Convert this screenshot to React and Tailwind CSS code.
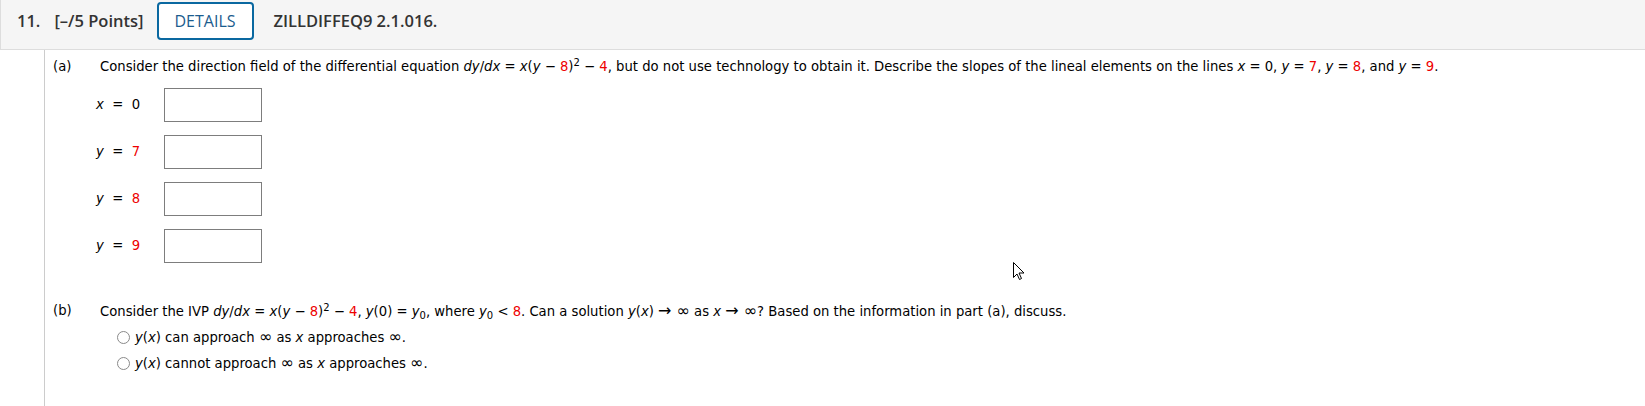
import React from "react";

const font = { fontFamily: '"DejaVu Sans", Verdana, sans-serif' };

function V({ children }) {
  return <i className="italic">{children}</i>;
}

function R({ children }) {
  return <span className="text-[#ee0000]">{children}</span>;
}

function Box() {
  return <div className="w-[98px] h-[34px] border border-[#7d7d7d] bg-white" />;
}

function Radio({ children }) {
  return (
    <label className="flex items-center gap-[5px] h-[26px]">
      <span className="w-[13px] h-[13px] rounded-full border border-[#8a8a8a] bg-white" />
      <span>{children}</span>
    </label>
  );
}

export default function App() {
  const rows = [
    { v: "x", n: "0", red: false },
    { v: "y", n: "7", red: true },
    { v: "y", n: "8", red: true },
    { v: "y", n: "9", red: true },
  ];

  return (
    <div className="relative w-[1645px] h-[406px] bg-white overflow-hidden text-black">
      {/* header */}
      <div
        className="h-[50px] bg-[#f5f5f5] border-b border-l border-[#dddddd] flex items-start pt-[2px] pl-[16px] text-[16.5px] font-semibold text-[#333333]"
        style={{ fontFamily: '"Open Sans", sans-serif' }}
      >
        <div className="h-[38px] flex items-center">
          <span>11.</span>
          <span className="ml-[14px]">[–/5 Points]</span>
        </div>
        <button className="ml-[13px] h-[38px] w-[97px] border-2 border-[#0a68a0] rounded-[4px] bg-white text-[#1b5c8e] font-normal text-[16px] flex items-center justify-center">
          DETAILS
        </button>
        <div className="ml-[20px] h-[38px] flex items-center">ZILLDIFFEQ9 2.1.016.</div>
      </div>

      {/* body */}
      <div className="ml-[44px] h-[356px] border-l border-[#cccccc] pl-[8px] pt-[8px] text-[13.2px]" style={font}>
        <div className="flex leading-[18px]">
          <span className="w-[47px] shrink-0">(a)</span>
          <span>
            Consider the direction field of the differential equation <V>dy</V>/<V>dx</V> = <V>x</V>(<V>y</V> − <R>8</R>)
            <sup className="text-[10px]">2</sup> − <R>4</R>, but do not use technology to obtain it. Describe the slopes of
            the lineal elements on the lines <V>x</V> = 0, <V>y</V> = <R>7</R>, <V>y</V> = <R>8</R>, and <V>y</V> = <R>9</R>.
          </span>
        </div>

        <div className="mt-[12px] flex flex-col gap-[13px]">
          {rows.map((r) => (
            <div key={r.v + r.n} className="flex items-center">
              <span className="w-[111px] pl-[43px] whitespace-pre">
                <V>{r.v}</V>{"  =  "}{r.red ? <R>{r.n}</R> : r.n}
              </span>
              <Box />
            </div>
          ))}
        </div>

        <div className="mt-[39px] flex leading-[18px]">
          <span className="w-[47px] shrink-0">(b)</span>
          <span>
            Consider the IVP <V>dy</V>/<V>dx</V> = <V>x</V>(<V>y</V> − <R>8</R>)<sup className="text-[10px]">2</sup> − <R>4</R>,{" "}
            <V>y</V>(0) = <V>y</V><sub className="text-[10px]">0</sub>, where <V>y</V>
            <sub className="text-[10px]">0</sub> &lt; <R>8</R>. Can a solution <V>y</V>(<V>x</V>) <span className="text-[16px]">→ ∞</span> as <V>x</V> <span className="text-[16px]">→ ∞</span>? Based
            on the information in part (a), discuss.
          </span>
        </div>

        <div className="mt-[3px] pl-[64px] flex flex-col">
          <Radio>
            <V>y</V>(<V>x</V>) can approach <span className="text-[16px]">∞</span> as <V>x</V> approaches <span className="text-[16px]">∞</span>.
          </Radio>
          <Radio>
            <V>y</V>(<V>x</V>) cannot approach <span className="text-[16px]">∞</span> as <V>x</V> approaches <span className="text-[16px]">∞</span>.
          </Radio>
        </div>
      </div>

      {/* mouse pointer */}
      <svg className="absolute left-[1013px] top-[262px]" width="12" height="19" viewBox="0 0 12 19">
        <path d="M0.5 0.5 L0.5 15.5 L4 12 L6.5 17.5 L8.5 16.5 L6 11 L11 11 Z" fill="white" stroke="black" strokeWidth="1" />
      </svg>
    </div>
  );
}
